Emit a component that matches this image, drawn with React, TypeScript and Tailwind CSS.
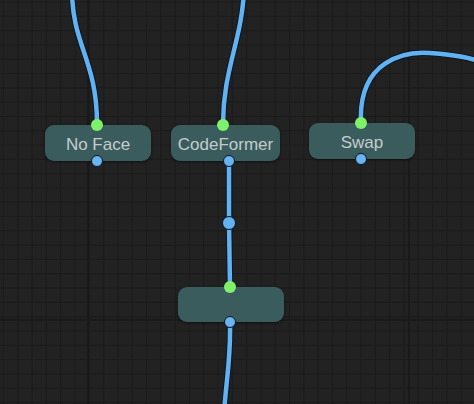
import React from 'react'

type FlowNode = {
  id: string
  label?: string
  x: number
  y: number
  w: number
  h: number
  inX: number
  outX: number
}

const nodes: FlowNode[] = [
  { id: 'noface', label: 'No Face', x: 45, y: 125, w: 106, h: 36, inX: 52, outX: 52 },
  { id: 'codeformer', label: 'CodeFormer', x: 171, y: 125, w: 109, h: 36, inX: 52, outX: 58 },
  { id: 'swap', label: 'Swap', x: 309, y: 123, w: 106, h: 36, inX: 52, outX: 52 },
  { id: 'empty', x: 178, y: 287, w: 106, h: 35, inX: 52, outX: 52 },
]

const edges = [
  'M 72 -10 C 72 45, 97 60, 97 124',
  'M 244 -10 C 242 40, 223 70, 223 124',
  'M 361 123 C 358 60, 405 51, 430 53 S 470 57, 490 65',
  'M 229 161 L 229 223 L 230 286',
  'M 230 322 C 231 360, 226 380, 224 414',
]

const Grid = () => {
  const minor: number[] = []
  for (let i = 0; i < 40; i++) minor.push(3.5 + i * 14.3)
  return (
    <svg className="absolute inset-0" width={474} height={404}>
      {minor.map((v) => (
        <g key={v}>
          <line x1={v} y1={0} x2={v} y2={404} stroke="#1c1c1c" strokeWidth={1} />
          <line x1={0} y1={v - 1.5} x2={474} y2={v - 1.5} stroke="#1c1c1c" strokeWidth={1} />
        </g>
      ))}
      <line x1={88} y1={0} x2={88} y2={404} stroke="#171717" strokeWidth={1.5} />
      <line x1={409} y1={0} x2={409} y2={404} stroke="#181818" strokeWidth={1.5} />
      <line x1={0} y1={320} x2={474} y2={320} stroke="#181818" strokeWidth={1.5} />
    </svg>
  )
}

const Edges = () => (
  <svg className="absolute inset-0" width={474} height={404}>
    {edges.map((d) => (
      <g key={d}>
        <path d={d} fill="none" stroke="#0d1620" strokeWidth={6.5} strokeLinecap="round" />
        <path d={d} fill="none" stroke="#62b2f2" strokeWidth={4.5} strokeLinecap="round" />
      </g>
    ))}
    <circle cx={229} cy={223} r={6.5} fill="#62b2f2" stroke="#0d1620" strokeWidth={1} />
  </svg>
)

const Node = ({ node }: { node: FlowNode }) => (
  <div
    className="absolute"
    style={{ left: node.x, top: node.y, width: node.w, height: node.h }}
  >
    <div className="flex h-full w-full items-center justify-center rounded-[9px] bg-[#3b5c5d] pt-[2px] shadow-[0_1px_3px_rgba(0,0,0,0.5)]">
      {node.label && (
        <span className="font-['Liberation_Sans',Arial,sans-serif] text-[17px] leading-none text-[#c3cccc]">
          {node.label}
        </span>
      )}
    </div>
    <span
      className="absolute -top-[6px] h-[12px] w-[12px] -translate-x-1/2 rounded-full bg-[#7ef06a]"
      style={{ left: node.inX }}
    />
    <span
      className="absolute -bottom-[6px] h-[12px] w-[12px] -translate-x-1/2 rounded-full border border-[#0d1620] bg-[#6ab4f2]"
      style={{ left: node.outX }}
    />
  </div>
)

export default function App() {
  return (
    <div className="relative h-[404px] w-[474px] overflow-hidden bg-[#222222]">
      <Grid />
      <Edges />
      {nodes.map((n) => (
        <Node key={n.id} node={n} />
      ))}
    </div>
  )
}
